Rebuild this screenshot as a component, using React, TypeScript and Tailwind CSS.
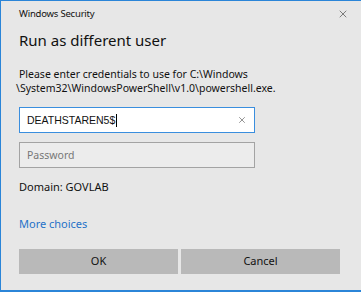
import { X } from "lucide-react";

export default function App() {
  return (
    <div
      className="w-[361px] h-[292px] bg-[#e7e7e7] border-l border-t border-b-2 border-[#2b85d8] text-[#111] overflow-hidden"
      style={{ fontFamily: '"Noto Sans", "Open Sans", sans-serif' }}
    >
      {/* title bar */}
      <div className="flex items-center justify-between h-[26px] pl-[18px] pr-[12px]">
        <span className="text-[9.5px] tracking-[-0.2px] leading-none">Windows Security</span>
        <X className="w-[12px] h-[12px] text-[#333]" strokeWidth={1.2} />
      </div>

      <div className="pl-[18px]">
        <h1 className="mt-[2px] text-[15px] leading-[22px] text-[#111]">Run as different user</h1>

        <p className="mt-[16px] text-[10.5px] leading-[14px]">
          Please enter credentials to use for C:\Windows
          <br />
          <span className="-ml-[3px]">\System32\WindowsPowerShell\v1.0\powershell.exe.</span>
        </p>

        {/* username */}
        <div className="mt-[12px] w-[236px] h-[26px] bg-white border border-[#3a8ede] flex items-center pl-[7px] pr-[7px]">
          <span
            className="text-[10.5px] leading-none"
            style={{ fontFamily: '"Liberation Sans", Arial, sans-serif' }}
          >
            DEATHSTAREN5$
          </span>
          <span className="w-px h-[13px] bg-black ml-[1px]" />
          <div className="flex-1" />
          <X className="w-[10px] h-[10px] text-[#555]" strokeWidth={1.5} />
        </div>

        {/* password */}
        <div className="mt-[9px] w-[236px] h-[26px] bg-[#ececec] border border-[#a3a3a3] flex items-center pl-[7px]">
          <span className="text-[10.5px] leading-none text-[#777]">Password</span>
        </div>

        <div className="mt-[12px] text-[11px] leading-[14px]">Domain: GOVLAB</div>

        <div className="mt-[23px] text-[11px] leading-[14px] text-[#1f72c8]">More choices</div>

        <div className="mt-[18px] flex gap-[3px]">
          <button className="w-[159px] h-[25px] bg-[#b9b9b9] text-[11px] text-[#111]">OK</button>
          <button className="w-[159px] h-[25px] bg-[#b9b9b9] text-[11px] text-[#111]">Cancel</button>
        </div>
      </div>
    </div>
  );
}
